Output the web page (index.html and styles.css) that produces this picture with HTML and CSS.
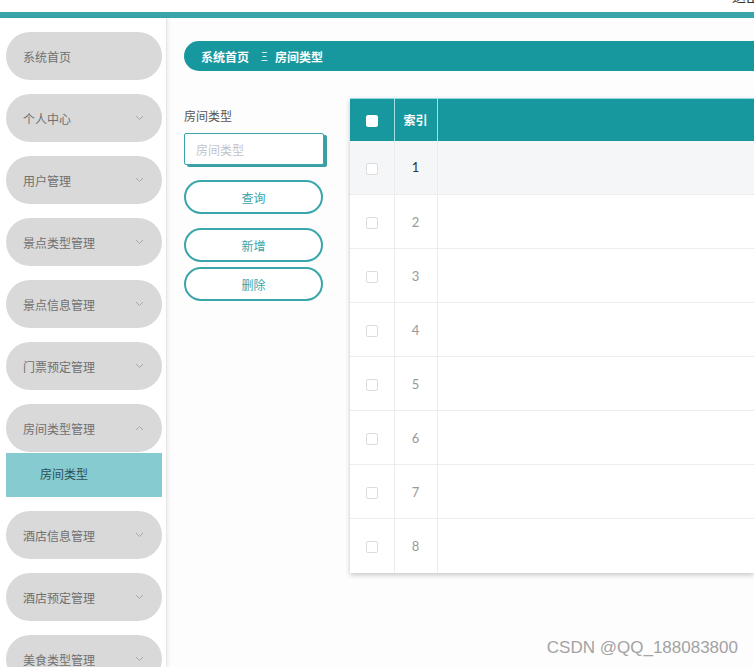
FILE: index.html
```html
<!DOCTYPE html>
<html lang="zh-CN">
<head>
  <meta charset="UTF-8">
  <title>房间类型</title>
  <link rel="stylesheet" href="styles.css">
</head>
<body>
  <header class="topbar">
    <span class="top-user">退出</span>
  </header>

  <div class="layout">
    <aside class="sidebar">
      <div class="menu-item">系统首页</div>
      <div class="menu-item">个人中心<svg class="arrow" width="9" height="6" viewBox="0 0 9 6"><polyline points="1,1 4.5,4.5 8,1"/></svg></div>
      <div class="menu-item">用户管理<svg class="arrow" width="9" height="6" viewBox="0 0 9 6"><polyline points="1,1 4.5,4.5 8,1"/></svg></div>
      <div class="menu-item">景点类型管理<svg class="arrow" width="9" height="6" viewBox="0 0 9 6"><polyline points="1,1 4.5,4.5 8,1"/></svg></div>
      <div class="menu-item">景点信息管理<svg class="arrow" width="9" height="6" viewBox="0 0 9 6"><polyline points="1,1 4.5,4.5 8,1"/></svg></div>
      <div class="menu-item">门票预定管理<svg class="arrow" width="9" height="6" viewBox="0 0 9 6"><polyline points="1,1 4.5,4.5 8,1"/></svg></div>
      <div class="menu-item open">房间类型管理<svg class="arrow" width="9" height="6" viewBox="0 0 9 6"><polyline points="1,5 4.5,1.5 8,5"/></svg></div>
      <div class="submenu-item">房间类型</div>
      <div class="menu-item">酒店信息管理<svg class="arrow" width="9" height="6" viewBox="0 0 9 6"><polyline points="1,1 4.5,4.5 8,1"/></svg></div>
      <div class="menu-item">酒店预定管理<svg class="arrow" width="9" height="6" viewBox="0 0 9 6"><polyline points="1,1 4.5,4.5 8,1"/></svg></div>
      <div class="menu-item">美食类型管理<svg class="arrow" width="9" height="6" viewBox="0 0 9 6"><polyline points="1,1 4.5,4.5 8,1"/></svg></div>
    </aside>

    <main class="content">
      <div class="breadcrumb">
        <span class="crumb">系统首页</span>
        <svg class="sep" width="7" height="11" viewBox="0 0 7 11"><path d="M1 1.5h5M1.5 5.5h4M0.5 9.5h6"/></svg>
        <span class="crumb">房间类型</span>
      </div>

      <div class="panel">
        <form class="search-form">
          <label class="field-label" for="roomtype">房间类型</label>
          <input type="text" id="roomtype" placeholder="房间类型">
          <button type="button" class="btn btn-query">查询</button>
          <button type="button" class="btn btn-add">新增</button>
          <button type="button" class="btn">删除</button>
        </form>

        <div class="table-wrap">
          <table class="data-table">
            <thead>
              <tr>
                <th class="col-check"><span class="check check-head"></span></th>
                <th class="col-index">索引</th>
                <th></th>
              </tr>
            </thead>
            <tbody>
              <tr class="hover"><td class="col-check"><span class="check"></span></td><td class="col-index">1</td><td></td></tr>
              <tr><td class="col-check"><span class="check"></span></td><td class="col-index">2</td><td></td></tr>
              <tr><td class="col-check"><span class="check"></span></td><td class="col-index">3</td><td></td></tr>
              <tr><td class="col-check"><span class="check"></span></td><td class="col-index">4</td><td></td></tr>
              <tr><td class="col-check"><span class="check"></span></td><td class="col-index">5</td><td></td></tr>
              <tr><td class="col-check"><span class="check"></span></td><td class="col-index">6</td><td></td></tr>
              <tr><td class="col-check"><span class="check"></span></td><td class="col-index">7</td><td></td></tr>
              <tr><td class="col-check"><span class="check"></span></td><td class="col-index">8</td><td></td></tr>
            </tbody>
          </table>
        </div>
      </div>
    </main>
  </div>

  <div class="watermark">CSDN @QQ_188083800</div>
</body>
</html>
```

FILE: styles.css
```css
* {
  box-sizing: border-box;
}

body {
  margin: 0;
  font-family: "Lato", "Noto Sans CJK SC", sans-serif;
  background: #fdfdfd;
  height: 667px;
  overflow: hidden;
}

.topbar {
  height: 18px;
  background: #fff;
  border-bottom: 6px solid #38a5aa;
  display: flex;
  justify-content: flex-end;
  overflow: hidden;
}

.top-user {
  font-size: 14px;
  line-height: 14px;
  margin-top: -10px;
  margin-right: -6px;
  color: #333;
}

.layout {
  display: flex;
}

/* left menu */
.sidebar {
  width: 167px;
  flex-shrink: 0;
  padding-top: 14px;
  height: 649px;
  background: #fff;
  border-right: 1px solid #e6e6e6;
  box-shadow: 1px 0 4px rgba(0, 0, 0, 0.08);
  overflow: hidden;
}

.menu-item {
  display: flex;
  align-items: center;
  justify-content: space-between;
  width: 156px;
  height: 48px;
  margin: 0 0 14px 6px;
  padding: 0 18px 0 17px;
  border-radius: 24px;
  background: #d9d9d9;
  color: #707070;
  font-size: 12px;
}

.menu-item.open {
  margin-bottom: 1px;
}

.arrow {
  fill: none;
  stroke: #a8a8a8;
  stroke-width: 1;
}

.submenu-item {
  width: 156px;
  height: 44px;
  margin: 0 0 14px 6px;
  padding-left: 34px;
  line-height: 44px;
  background: #86cbd0;
  color: #2f4f55;
  font-size: 12px;
}

/* main area */
.content {
  flex: 1;
  padding: 23px 0 0 17px;
  overflow: hidden;
}

.breadcrumb {
  display: flex;
  align-items: center;
  gap: 6px;
  height: 30px;
  padding-left: 17px;
  border-radius: 15px 0 0 15px;
  background: #17989f;
}

.crumb {
  color: #fff;
  font-size: 12px;
  font-weight: bold;
}

.sep {
  margin: 0 1px 0 6px;
  fill: none;
  stroke: #d8f0f1;
  stroke-width: 1;
}

.panel {
  display: flex;
  gap: 23px;
  margin-top: 27px;
}

.search-form {
  width: 143px;
  flex-shrink: 0;
  display: flex;
  flex-direction: column;
}

.field-label {
  margin-top: 11px;
  font-size: 12px;
  line-height: 16px;
  color: #555;
}

.search-form input {
  width: 140px;
  height: 32px;
  margin-top: 8px;
  padding: 0 11px;
  border: 1px solid #3aa6ab;
  border-radius: 2px;
  box-shadow: 3px 2px 0 #3a9fa4;
  font-family: "Noto Sans CJK SC", sans-serif;
  font-size: 12px;
  color: #555;
  outline: none;
}

.search-form input::placeholder {
  color: #c0c4cc;
}

.btn {
  width: 139px;
  height: 34px;
  margin-top: 5px;
  border: 2px solid #3aa6ab;
  border-radius: 17px;
  background: #fff;
  color: #3aa6ab;
  font-family: "Noto Sans CJK SC", sans-serif;
  font-size: 12px;
}

.btn-query {
  margin-top: 15px;
}

.btn-add {
  margin-top: 14px;
}

/* table */
.table-wrap {
  flex: 1;
  min-width: 404px;
  background: #fff;
  box-shadow: 0 2px 5px rgba(0, 0, 0, 0.22);
}

.data-table {
  width: 100%;
  border-collapse: collapse;
  font-size: 13px;
}

.data-table th {
  height: 42px;
  background: #17989f;
  border-top: 1px solid #8fdde2;
  border-right: 1px solid #9fdfe3;
  color: #fff;
  font-weight: bold;
  font-size: 12px;
}

.data-table th:last-child {
  border-right: none;
}

.data-table td {
  height: 54px;
  border-bottom: 1px solid #ebeef0;
  border-right: 1px solid #ececec;
  color: #999;
  text-align: center;
}

.data-table td:last-child {
  border-right: none;
}

.data-table tr:last-child td {
  border-bottom: none;
}

.data-table tr.hover td {
  background: #f4f6f7;
  color: #333;
}

.col-check {
  width: 44px;
  text-align: center;
}

.col-index {
  width: 43px;
}

.check {
  display: inline-block;
  width: 12px;
  height: 12px;
  border: 1px solid #dcdcdc;
  border-radius: 2px;
  background: #fff;
  vertical-align: middle;
}

.check-head {
  border-color: #fff;
}

.watermark {
  position: absolute;
  right: 16px;
  bottom: 9px;
  font-family: "Liberation Sans", sans-serif;
  font-size: 17px;
  color: #a3a3a3;
}
```
